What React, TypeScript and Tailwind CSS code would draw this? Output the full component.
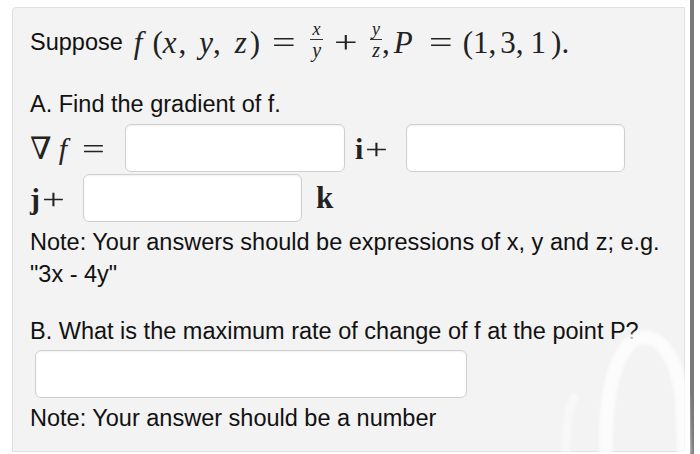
import React from "react";

const sans = { fontFamily: '"Liberation Sans", Arial, sans-serif' };
const serif = { fontFamily: '"Liberation Serif", "Times New Roman", serif' };
const nabla = { fontFamily: '"DejaVu Serif", "Liberation Serif", serif' };

// wide math operators like the MathJax ones
function Op({ c, w }: { c: string; w: string }) {
  return (
    <span className={`inline-block ${w} text-center`}>
      <span className="inline-block scale-x-[1.35]">{c}</span>
    </span>
  );
}

function Frac({ top, bottom }: { top: string; bottom: string }) {
  return (
    <span className="inline-flex flex-col items-center mb-[8px] text-[20px] leading-[18px] italic">
      <span className="px-[2px] pb-[1px] text-[18px]">{top}</span>
      <span className="h-px w-full bg-[#333]" />
      <span className="px-[2px] pt-[1px]">{bottom}</span>
    </span>
  );
}

function Box({ w }: { w: string }) {
  return (
    <div
      className={`${w} h-[48px] rounded-[6px] border border-[#cfcfcf] bg-white shadow-[inset_0_1px_2px_rgba(0,0,0,0.06)]`}
    />
  );
}

export default function App() {
  return (
    <div className="relative w-[700px] h-[454px] bg-white flex overflow-hidden">
      <div
        className="ml-[12px] mt-[7px] w-[673px] h-[445px] bg-[#f3f3f3] border border-[#e0e0e0] rounded-tl-[4px] pl-[17px] pt-[8px] text-[#111] text-[23.5px]"
        style={sans}
      >
        <div className="h-[54px] flex items-center">
          <span>Suppose</span>
          <span className="ml-[11px] text-[31px] text-[#222] flex items-center" style={serif}>
            <i>f</i>
            <span className="ml-[10px]">(</span>
            <i>x</i>
            <span className="ml-[2px] mr-[13px]">,</span>
            <i>y</i>
            <span className="mr-[14px]">,</span>
            <i>z</i>
            <span className="ml-[3px]">)</span>
            <span className="ml-[12px]">
              <Op c="=" w="w-[24px]" />
            </span>
            <span className="ml-[14px] flex">
              <Frac top="x" bottom="y" />
            </span>
            <span className="ml-[12px]">
              <Op c="+" w="w-[22px]" />
            </span>
            <span className="ml-[13px] flex">
              <Frac top="y" bottom="z" />
            </span>
            <span>,</span>
            <i className="ml-[4px]">P</i>
            <span className="ml-[16px]">
              <Op c="=" w="w-[24px]" />
            </span>
            <span className="ml-[10px]">(1,</span>
            <span className="ml-[4px]">3,</span>
            <span className="ml-[7px]">1</span>
            <span className="ml-[5px]">)</span>
            <span>.</span>
          </span>
        </div>

        <div className="mt-[18px] leading-[32px]">A. Find the gradient of f.</div>

        <div className="mt-[4px] flex items-center h-[48px]">
          <span className="w-[95px] text-[30px] text-[#222] flex items-center" style={serif}>
            <span style={nabla} className="text-[31px] leading-none">∇</span>
            <i className="ml-[7px]">f</i>
            <span className="ml-[14px]">
              <Op c="=" w="w-[24px]" />
            </span>
          </span>
          <Box w="w-[220px]" />
          <span className="ml-[10px] w-[51px] text-[30px] text-[#222] flex items-center" style={serif}>
            <b>i</b>
            <Op c="+" w="w-[26px]" />
          </span>
          <Box w="w-[219px]" />
        </div>

        <div className="mt-[2px] flex items-center h-[48px]">
          <span className="w-[53px] text-[30px] text-[#222] flex items-center" style={serif}>
            <b>j</b>
            <Op c="+" w="w-[26px]" />
          </span>
          <Box w="w-[219px]" />
          <span className="ml-[14px] text-[31px] text-[#222]" style={serif}>
            <b>k</b>
          </span>
        </div>

        <div className="mt-[4px] leading-[32px]">
          Note: Your answers should be expressions of x, y and z; e.g.
          <br />
          "3x - 4y"
        </div>

        <div className="mt-[25px] leading-[32px] whitespace-nowrap">
          B. What is the maximum rate of change of f at the point P?
        </div>

        <div className="mt-[3px] ml-[5px]">
          <Box w="w-[432px]" />
        </div>

        <div className="mt-[4px] leading-[32px]">Note: Your answer should be a number</div>
      </div>
      <div className="ml-[5px] w-[4px] h-full bg-[#7a7a7a]" />

      {/* faint white scribble over the bottom-right corner */}
      <svg className="absolute left-0 top-0 pointer-events-none blur-[1.5px]" width="700" height="454" viewBox="0 0 700 454">
        <g fill="none" stroke="#ffffff" strokeLinecap="round" opacity="0.7">
          <path d="M606 454 C605 410 610 362 632 342 C654 326 677 352 682 400 L684 454" strokeWidth="14" />
          <path d="M566 454 C566 430 568 410 574 398" strokeWidth="9" opacity="0.6" />
        </g>
      </svg>
    </div>
  );
}
